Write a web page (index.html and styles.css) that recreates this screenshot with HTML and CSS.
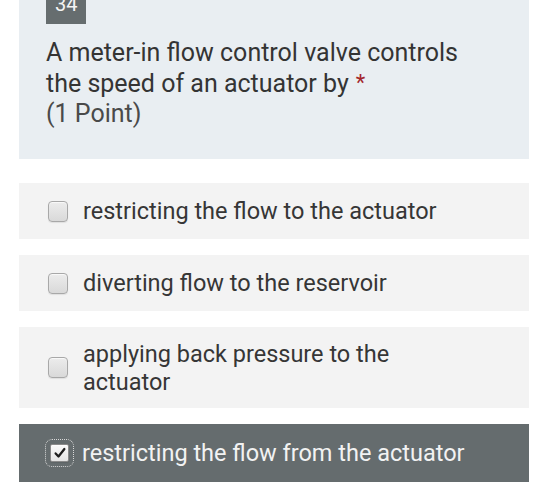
FILE: index.html
```html
<!DOCTYPE html>
<html lang="en">
<head>
<meta charset="utf-8">
<title>Question 34</title>
<link rel="stylesheet" href="styles.css">
</head>
<body>
<main class="page">
  <section class="question-card">
    <div class="badge">34</div>
    <p class="question-text">A meter-in flow control valve controls the speed of an actuator by<span class="required">*</span></p>
    <p class="points">(1 Point)</p>
  </section>
  <ul class="options">
    <li class="option">
      <span class="box"></span>
      <span class="label">restricting the flow to the actuator</span>
    </li>
    <li class="option">
      <span class="box"></span>
      <span class="label">diverting flow to the reservoir</span>
    </li>
    <li class="option">
      <span class="box"></span>
      <span class="label">applying back pressure to the actuator</span>
    </li>
    <li class="option is-checked">
      <span class="box box-checked">
        <svg viewBox="0 0 16 16" width="14" height="14" aria-hidden="true"><path d="M3 8.5 L6.3 12 L13 3.5" fill="none" stroke="#1e1e1e" stroke-width="2.6" stroke-linecap="round" stroke-linejoin="round"/></svg>
      </span>
      <span class="label">restricting the flow from the actuator</span>
    </li>
  </ul>
</main>
</body>
</html>
```

FILE: styles.css
```css
* { box-sizing: border-box; }

html, body {
  margin: 0;
  padding: 0;
  background: #ffffff;
}

body {
  font-family: "Roboto", "Liberation Sans", Arial, sans-serif;
  color: #333333;
}

.page {
  padding: 0 19px;
}

.question-card {
  margin-top: -10px;
  background: #e9eef2;
  padding: 0 27px 30px 27px;
}

.badge {
  display: inline-block;
  background: #666d6f;
  color: #f4f4f4;
  font-size: 20px;
  line-height: 20px;
  padding: 4px 9px 10px 9px;
}

.question-text {
  margin: 14px 0 0 0;
  max-width: 430px;
  font-size: 25px;
  line-height: 30px;
  color: #343434;
}

.required {
  color: #a4262c;
  font-size: 22px;
  margin-left: 7px;
  vertical-align: 2px;
}

.points {
  margin: 0;
  font-size: 25px;
  line-height: 30px;
  color: #4a4a4a;
}

.options {
  list-style: none;
  margin: 24px 0 0 0;
  padding: 0;
  display: flex;
  flex-direction: column;
  gap: 16px;
}

.option {
  display: flex;
  align-items: center;
  gap: 15px;
  min-height: 56px;
  padding: 12.5px 29px;
  background: #f3f3f3;
  font-size: 23.5px;
  line-height: 28px;
  color: #363636;
}

.label {
  max-width: 390px;
}

.box {
  flex: none;
  width: 20px;
  height: 21px;
  border: 1px solid #a8a8a8;
  border-radius: 4px;
  background: linear-gradient(#ececec, #d9d9d9);
  box-shadow: inset 0 1px 1px rgba(255,255,255,0.7), 0 1px 1px rgba(0,0,0,0.08);
}

.option.is-checked {
  background: #656c6e;
  color: #f2f2f2;
  min-height: 58px;
}

.box-checked {
  display: flex;
  align-items: center;
  justify-content: center;
  width: 19px;
  height: 18px;
  border: 1px solid #8a8a8a;
  border-radius: 2px;
  background: linear-gradient(#fafafa, #e4e4e4);
  outline: 1px dotted #d8d8d8;
  outline-offset: 4px;
  margin-left: 2px;
  margin-right: -2px;
}
```
